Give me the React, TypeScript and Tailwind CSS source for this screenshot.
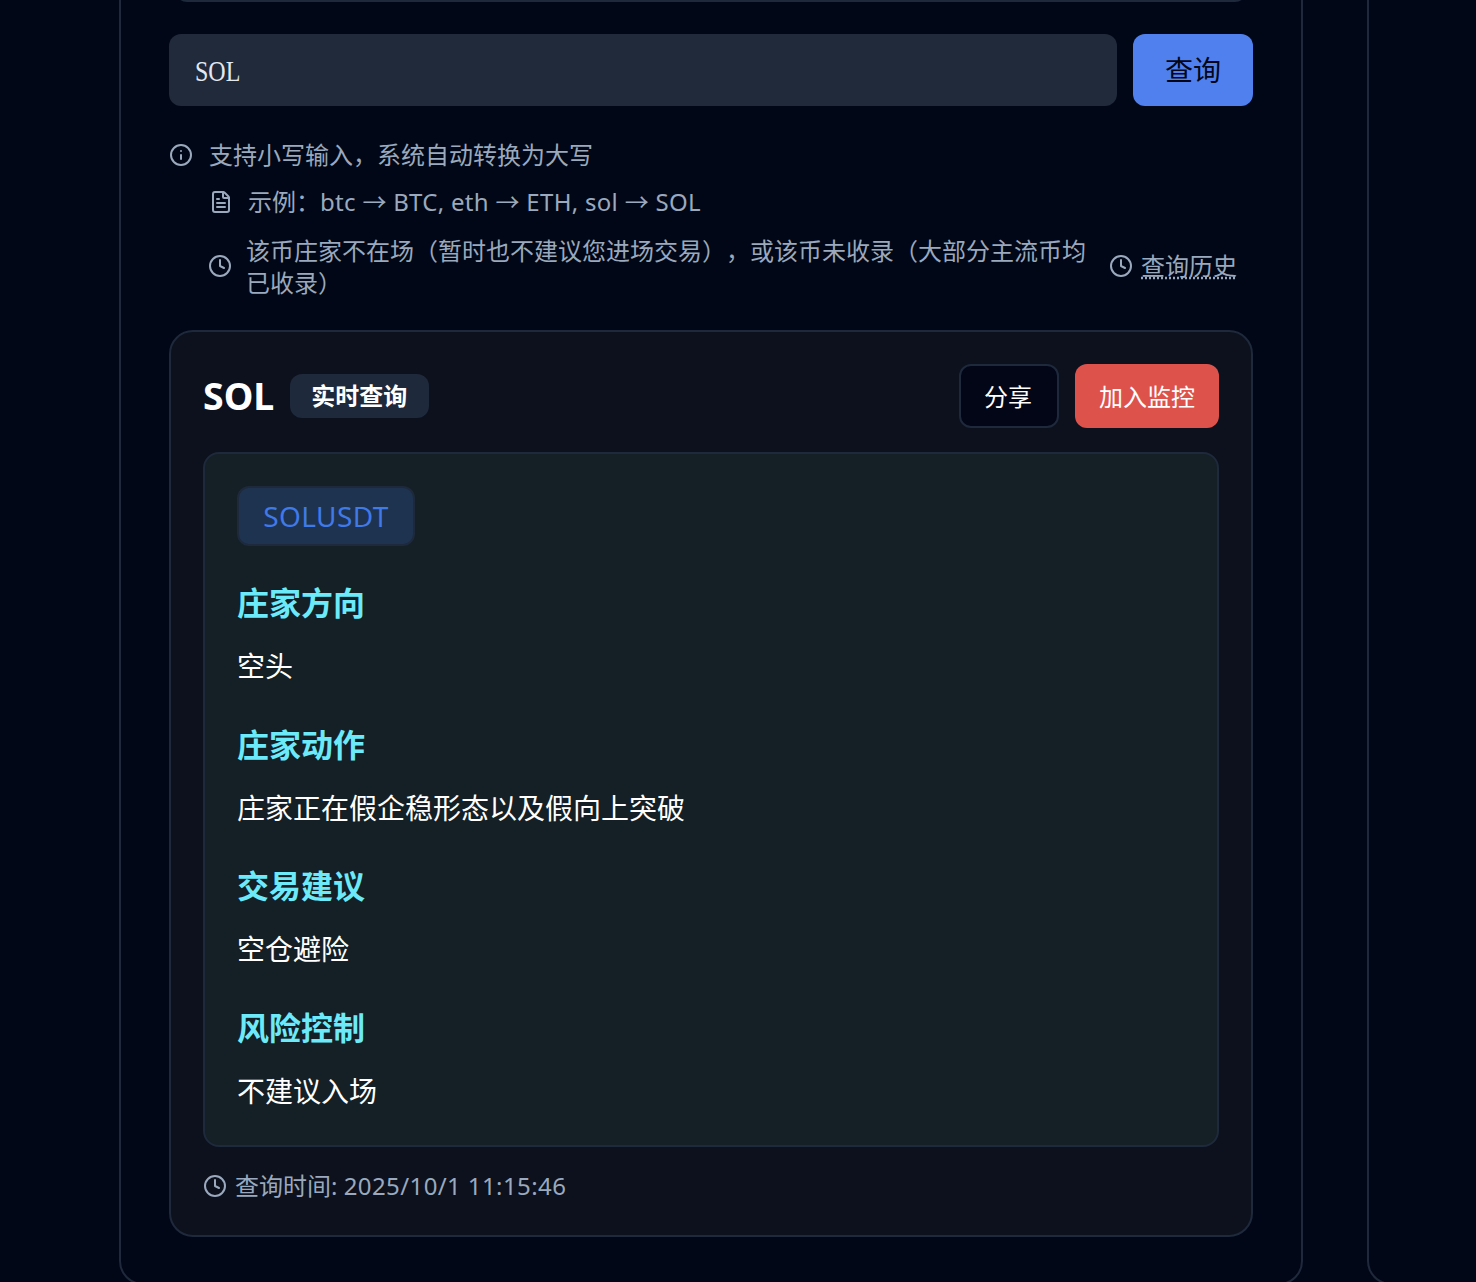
import { Clock, FileText, Info } from "lucide-react";

function Section({ title, value }: { title: string; value: string }) {
  return (
    <div className="flex flex-col">
      <h3 className="text-[32px] leading-[40px] font-bold text-[#6ceaf9]">{title}</h3>
      <p className="mt-[22px] text-[28px] leading-[42px] text-white">{value}</p>
    </div>
  );
}

export default function App() {
  return (
    <div className="h-[1282px] overflow-hidden bg-[#010717] font-['Noto_Sans','Noto_Sans_CJK_SC',sans-serif] [text-spacing-trim:space-all]">
      <div className="-mt-[42px] flex pl-[119px]">
        <main className="w-[1184px] shrink-0 rounded-[24px] border-2 border-[#1e293b] bg-[#010717] px-[48px] pb-[46px]">
          <div className="mx-[6px] h-[42px] rounded-b-[12px] border-b-2 border-[#1e293b]" />
          <div className="mt-[32px] flex gap-4">
            <div className="flex h-[72px] flex-1 items-center rounded-xl bg-[#202a3a] px-[26px] text-[#e2e8f0]">
              <span className="inline-block origin-left scale-x-[0.8] font-['Liberation_Serif',serif] text-[30px]">SOL</span>
            </div>
            <button className="h-[72px] w-[120px] rounded-xl bg-[#4f80ee] text-[28px] text-[#020617]">
              查询
            </button>
          </div>

          <div className="mt-[29px] flex items-center gap-[16px] text-[24px] leading-[40px] text-[#9aa9bd]">
            <Info className="h-6 w-6" strokeWidth={2} />
            <span>支持小写输入，系统自动转换为大写</span>
          </div>
          <div className="mt-[7px] flex items-center gap-[15px] pl-[40px] text-[24px] leading-[40px] text-[#9aa9bd]">
            <FileText className="h-6 w-6" strokeWidth={2} />
            <span>
              示例：<span className="tracking-[0.3px]">btc → BTC, eth → ETH, sol → SOL</span>
            </span>
          </div>
          <div className="mt-[13px] flex items-center pl-[39px] text-[24px] leading-[32px] text-[#9aa9bd]">
            <Clock className="h-6 w-6 shrink-0 -translate-y-px" strokeWidth={2} />
            <span className="ml-[14px] w-[840px] shrink-0">
              该币庄家不在场（暂时也不建议您进场交易），或该币未收录（大部分主流币均已收录）
            </span>
            <span className="ml-[23px] flex -translate-y-px items-center gap-2">
              <Clock className="h-6 w-6 shrink-0" strokeWidth={2} />
              <span className="underline decoration-dotted underline-offset-2">查询历史</span>
            </span>
          </div>

          <section className="mt-[31px] rounded-[24px] border-2 border-[#1e293b] bg-[#0c111d] px-[32px] pt-[32px] pb-[33px]">
            <header className="flex items-center justify-between">
              <div className="flex items-center gap-4">
                <h2 className="text-[37.5px] leading-[48px] font-bold text-white">SOL</h2>
                <span className="flex h-[44px] items-center rounded-xl bg-[#1e293b] pr-[22px] pl-[21px] text-[24px] font-bold text-white">
                  实时查询
                </span>
              </div>
              <div className="flex gap-4">
                <button className="h-[64px] w-[100px] rounded-xl border-2 border-[#1e293b] bg-[#020617] pt-[2px] pr-[2px] text-[24px] text-white">
                  分享
                </button>
                <button className="h-[64px] w-[144px] rounded-xl bg-[#de524c] pt-[2px] text-[24px] text-white">
                  加入监控
                </button>
              </div>
            </header>

            <div className="mt-[24px] rounded-2xl border-2 border-[#1e293b] bg-[#141f26] px-[32px] pt-[32px] pb-[33px]">
              <span className="inline-flex h-[60px] w-[178px] items-center justify-center rounded-xl border-2 border-[#1e293b] bg-[#1e3350] text-[28px] tracking-[0.4px] text-[#4079e8]">
                SOLUSDT
              </span>
              <div className="mt-[37px] flex flex-col gap-[37.67px]">
                <Section title="庄家方向" value="空头" />
                <Section title="庄家动作" value="庄家正在假企稳形态以及假向上突破" />
                <Section title="交易建议" value="空仓避险" />
                <Section title="风险控制" value="不建议入场" />
              </div>
            </div>

            <div className="mt-[23px] flex items-center gap-[8px] text-[24px] leading-[32px] text-[#9aa9bd]">
              <Clock className="h-6 w-6" strokeWidth={2} />
              <span>
                查询时间: <span className="tracking-[0.4px]">2025/10/1 11:15:46</span>
              </span>
            </div>
          </section>
        </main>
        <div className="ml-[64px] flex-1 rounded-l-[24px] border-2 border-r-0 border-[#1e293b]" />
      </div>
    </div>
  );
}
